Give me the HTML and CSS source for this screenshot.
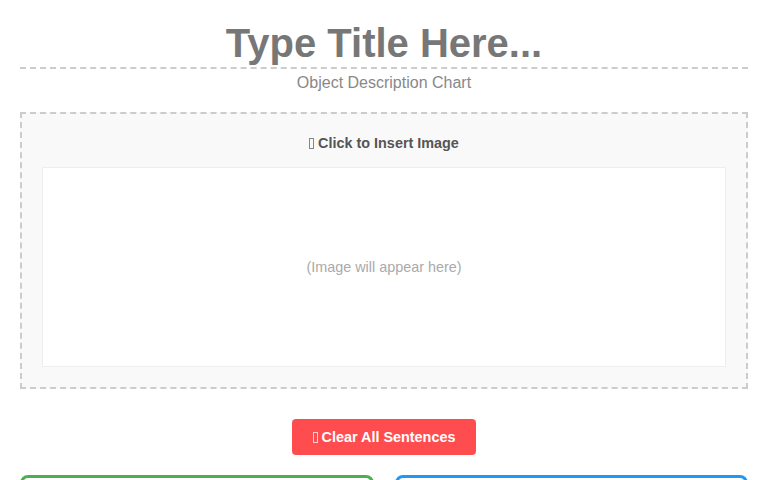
FILE: index.html
```html
<!DOCTYPE html>
<html lang="en">
<head>
  <meta charset="UTF-8" />
  <meta name="viewport" content="width=device-width, initial-scale=1.0"/>
  <title>Object Description Chart</title>
  <link rel="stylesheet" href="styles.css">
</head>
<body>

  <div class="page">
    <h1 class="title" contenteditable="true">Type Title Here...</h1>
    <p class="subtitle">Object Description Chart</p>

    <div class="image-box">
      <div class="image-label"><span class="glyph"></span>Click to Insert Image</div>
      <div class="image-preview">(Image will appear here)</div>
    </div>

    <div class="actions">
      <button class="clear-btn"><span class="glyph"></span>Clear All Sentences</button>
    </div>

    <div class="columns">
      <div class="col col-green"></div>
      <div class="col col-blue"></div>
    </div>
  </div>

</body>
</html>
```

FILE: styles.css
```css
* { box-sizing: border-box; }

body {
  margin: 0;
  font-family: 'Liberation Sans', Arial, sans-serif;
  background: #fff;
}

.page {
  padding: 20px 20px 20px;
}

.title {
  margin: 0;
  font-size: 40px;
  font-weight: bold;
  color: #777;
  text-align: center;
  line-height: 47px;
  border-bottom: 2px dashed #ccc;
}

.subtitle {
  margin: 5px 0 20px;
  text-align: center;
  font-size: 16px;
  color: #888;
  line-height: 18px;
}

.image-box {
  border: 2px dashed #ccc;
  background: #f9f9f9;
  padding: 21px 20px 20px;
}

.image-label {
  text-align: center;
  font-size: 0.9rem;
  font-weight: bold;
  color: #555;
  line-height: 17px;
  margin-bottom: 15px;
}

/* missing-glyph box in front of labels */
.glyph {
  display: inline-block;
  width: 5px;
  height: 11px;
  border: 1px solid currentColor;
  opacity: 0.7;
  margin-right: 4px;
  vertical-align: -1px;
}

.image-preview {
  height: 200px;
  background: #fff;
  border: 1px solid #eee;
  display: flex;
  justify-content: center;
  align-items: center;
  font-size: 0.9rem;
  color: #aaa;
}

.actions {
  display: flex;
  justify-content: center;
  margin: 30px 0 20px;
}

.clear-btn {
  background: #ff4d4f;
  color: #fff;
  border: none;
  border-radius: 4px;
  font-family: inherit;
  font-size: 0.9rem;
  font-weight: bold;
  height: 36px;
  padding: 0 21px;
  cursor: pointer;
}

.columns {
  display: grid;
  grid-template-columns: 1fr 1fr;
  gap: 21px;
}

.col {
  height: 120px;
  border: 3px solid;
  border-radius: 8px;
  background: #fff;
}

.col-green { border-color: #4caf50; }
.col-blue { border-color: #2196f3; }
```
